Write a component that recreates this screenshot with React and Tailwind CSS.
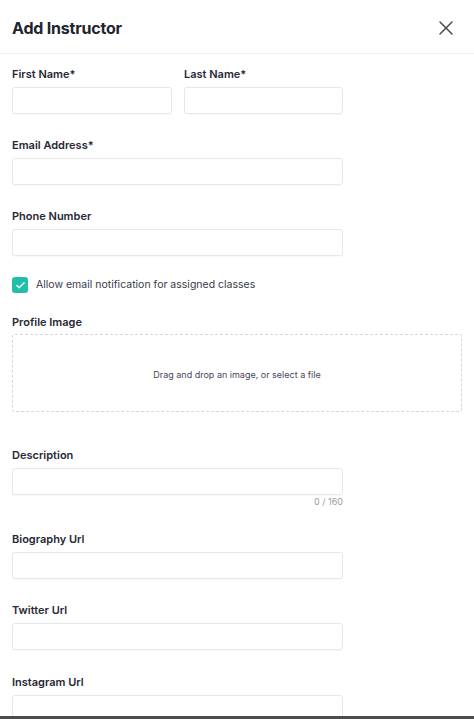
import React from 'react';
import { X, Check } from 'lucide-react';

const font = { fontFamily: 'Inter, "Noto Sans", sans-serif' };

const Label = ({ children }) => (
  <div className="h-4 text-[11px] leading-4 font-semibold text-[#272836]">{children}</div>
);

const Input = ({ className = '' }) => (
  <div className={`mt-[5px] h-[27px] rounded-[3px] border border-[#e6e7ea] bg-white shadow-[0_1px_1px_rgba(0,0,0,0.03)] ${className}`} />
);

const Field = ({ label, className = '' }) => (
  <div className={className}>
    <Label>{label}</Label>
    <Input />
  </div>
);

export default function App() {
  return (
    <div className="flex h-[719px] w-[474px] flex-col bg-white" style={font}>
      <div className="flex-1 overflow-hidden">
        {/* Header */}
        <div className="flex h-[54px] items-center justify-between border-b border-[#f0f0f2] pl-3 pr-[16px] pt-[2px]">
          <h2 className="text-[16px] font-bold tracking-[-0.2px] text-[#22232f]">Add Instructor</h2>
          <X size={24} strokeWidth={1.5} className="text-[#4a4a52]" />
        </div>

        {/* Form */}
        <div className="px-3 pt-3">
          <div className="grid w-[331px] grid-cols-[160px_159px] gap-x-3">
            <Field label="First Name*" />
            <Field label="Last Name*" />
          </div>

          <Field label="Email Address*" className="mt-[23px] w-[331px]" />
          <Field label="Phone Number" className="mt-[23px] w-[331px]" />

          <div className="mt-[21px] flex h-4 items-center gap-[8px]">
            <div className="flex h-4 w-4 items-center justify-center rounded-[3px] bg-[#1fbfa9]">
              <Check size={11} strokeWidth={3} className="text-white" />
            </div>
            <span className="text-[10.5px] text-[#3a3b47]">Allow email notification for assigned classes</span>
          </div>

          <div className="mt-[21px]">
            <Label>Profile Image</Label>
            <div className="mt-1 flex h-[78px] w-[450px] items-center justify-center rounded-[3px] border border-dashed border-[#d6d6d9] pt-[3px]">
              <span className="text-[9px] text-[#45465a]">Drag and drop an image, or select a file</span>
            </div>
          </div>

          <div className="mt-[35px] w-[331px]">
            <Label>Description</Label>
            <Input />
            <div className="mt-[1px] text-right text-[9px] leading-[12px] text-[#9a9ba3]">0 / 160</div>
          </div>

          <Field label="Biography Url" className="mt-[23px] w-[331px]" />
          <Field label="Twitter Url" className="mt-[23px] w-[331px]" />
          <Field label="Instagram Url" className="mt-[24px] w-[331px]" />
        </div>
      </div>
      <div className="h-[3px] bg-[#4d4d4f]" />
    </div>
  );
}
